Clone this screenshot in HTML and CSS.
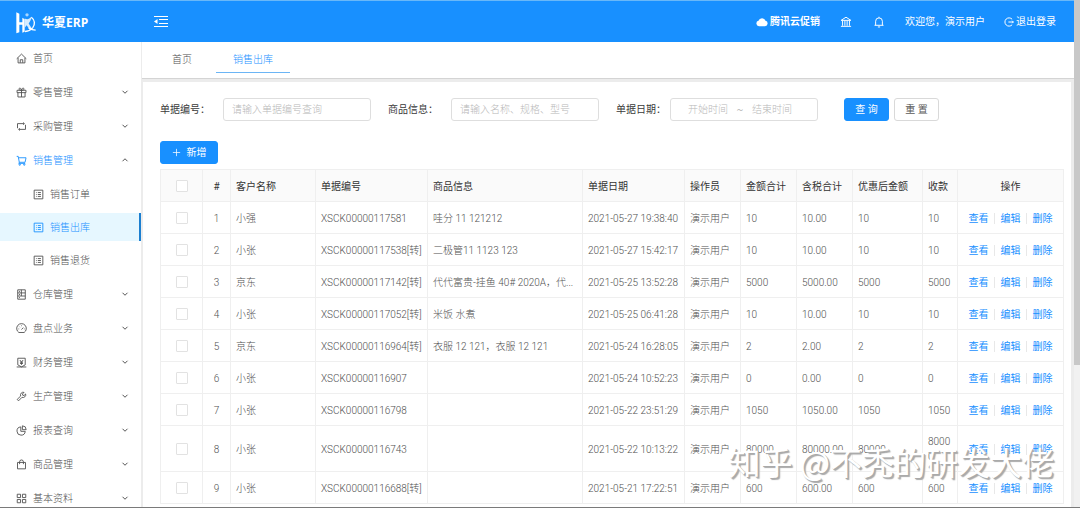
FILE: index.html
```html
<!DOCTYPE html>
<html lang="zh-CN">
<head>
<meta charset="utf-8">
<title>华夏ERP</title>
<link rel="stylesheet" href="styles.css">
</head>
<body>
<svg class="defs" aria-hidden="true">
  <symbol id="i-home" viewBox="0 0 16 16"><path d="M1 8.4 8 1.6l7 6.8M3 7v7.4h10V7M6.2 14.2V9.8h3.6v4.4"/></symbol>
  <symbol id="i-gift" viewBox="0 0 16 16"><path d="M1.5 4.8h13v3.4h-13zM2.8 8.2v6.3h10.4V8.2M8 4.8v9.7M8 4.8C5 4.8 4.3 3.8 4.3 2.9 4.3 1 7.6.8 8 4.8 8.4.8 11.7 1 11.7 2.9c0 .9-.7 1.9-3.7 1.9"/></symbol>
  <symbol id="i-retweet" viewBox="0 0 16 16"><path d="M2.2 10.5V3.8h9.6M10.4 2.2l1.8 1.6-1.8 1.6M13.8 5.5v6.7H4.2M5.6 10.6l-1.8 1.6 1.8 1.6"/></symbol>
  <symbol id="i-cart" viewBox="0 0 16 16"><path d="M1 2h2.2l1.6 8.6h8.4L14.6 4H3.7M4.8 10.6l-.8 1.6h9.4"/><circle cx="5.4" cy="14" r="1"/><circle cx="12" cy="14" r="1"/></symbol>
  <symbol id="i-profile" viewBox="0 0 16 16"><path d="M1.7 1.7h12.6v12.6H1.7zM7 5.2h4.5M7 8h4.5M7 10.8h4.5M4.3 5.2h1M4.3 8h1M4.3 10.8h1"/></symbol>
  <symbol id="i-store" viewBox="0 0 16 16"><path d="M2.5 1.2h11v13.6h-11zM2.5 5.7h11M2.5 10.2h11M7.8 1.2v9M4.4 3.5h1.4M4.4 8h1.4M4.4 12.5h1.4"/></symbol>
  <symbol id="i-dash" viewBox="0 0 16 16"><path d="M4.2 13.8a7 7 0 1 1 7.6 0zM8 9.5l2.6-2.8M8 3.6v1M3.6 8.6h1M11.5 8.6h1M5 5.4l.7.7"/></symbol>
  <symbol id="i-money" viewBox="0 0 16 16"><path d="M2.6 1.8h10.8v9.6L8 14.4l-5.4-3zM1 14.5h14M5.6 4.4 8 7.4l2.4-3M5.8 7.5h4.4M5.8 9.4h4.4M8 7.4v4"/></symbol>
  <symbol id="i-tool" viewBox="0 0 16 16"><path d="M14 4.3a4 4 0 0 1-5.3 4.9l-5 5.1-2-2 5.1-5A4 4 0 0 1 11.7 2L9.4 4.3l.4 1.9 1.9.4z"/></symbol>
  <symbol id="i-pie" viewBox="0 0 16 16"><path d="M7 2.8a6 6 0 1 0 6.4 6.4H7zM9.3 1.2v5.6h5.5a5.6 5.6 0 0 0-5.5-5.6z"/></symbol>
  <symbol id="i-bag" viewBox="0 0 16 16"><path d="M2.2 5h11.6v9.3H2.2zM5.2 7.5V4.2a2.8 2.8 0 0 1 5.6 0v3.3"/></symbol>
  <symbol id="i-grid" viewBox="0 0 16 16"><path d="M1.8 1.8h4.8v4.8H1.8zM9.4 1.8h4.8v4.8H9.4zM1.8 9.4h4.8v4.8H1.8zM9.4 9.4h4.8v4.8H9.4z"/></symbol>
  <symbol id="i-down" viewBox="0 0 16 16"><path d="m3 5.5 5 5 5-5"/></symbol>
  <symbol id="i-up" viewBox="0 0 16 16"><path d="m3 10.5 5-5 5 5"/></symbol>
  <symbol id="i-bank" viewBox="0 0 16 16"><path d="M1.5 5.8 8 1.6l6.5 4.2zM3.4 6v7M6.5 6v7M9.5 6v7M12.6 6v7M1.2 13.8h13.6"/></symbol>
  <symbol id="i-bell" viewBox="0 0 16 16"><path d="M3.5 12.3V7a4.5 4.5 0 0 1 9 0v5.3M2 12.4h12M6.5 14.6h3M8 1v1.4"/></symbol>
  <symbol id="i-logout" viewBox="0 0 16 16"><path d="M13 3.6a6.6 6.6 0 1 0 0 8.8M7 8h8M13 6l2 2-2 2"/></symbol>
  <symbol id="i-plus" viewBox="0 0 16 16"><path d="M8 1.5v13M1.5 8h13"/></symbol>
</svg>

<div class="frame">
  <div class="app">
    <header class="topbar">
      <div class="brand">
        <svg class="brand-logo" viewBox="0 0 60 68" aria-hidden="true">
          <path fill="#fff" d="M1 3l9 5v25h9v-13l7 4v38l-7 3V41h-9v22l-9 3z"/>
          <circle cx="33" cy="11" r="5" fill="#a9d6ff"/>
          <path fill="#d6ecff" d="M26 22c8 4 14 2 20-5 0 9-4 15-8 20l10 16-7 3-9-14-6 8z"/>
          <path fill="none" stroke="#fff" stroke-width="4" d="M46 18c11 8 12 22 4 32-6 7-14 10-23 11"/>
          <path fill="none" stroke="#fff" stroke-width="4" d="M38 50c7 5 13 7 21 7"/>
        </svg>
        <h1 class="brand-name">华夏ERP</h1>
      </div>
      <button class="fold" type="button" aria-label="收起菜单">
        <svg viewBox="0 0 14 13"><path fill="none" stroke="currentColor" d="M0 1.5h14M5 4.5h9M5 8.5h9M0 11.5h14"/><path fill="currentColor" d="M0 6.5 3.5 4v5z"/></svg>
      </button>
      <nav class="top-links">
        <a class="promo" href="#"><svg class="cloud" viewBox="0 0 16 16"><path fill="currentColor" d="M4 13.5a3.6 3.6 0 0 1-.7-7.1 4.9 4.9 0 0 1 9.4 0A3.6 3.6 0 0 1 12 13.5z"/></svg>腾讯云促销</a>
        <a href="#" aria-label="首页"><svg class="icon big"><use href="#i-bank"/></svg></a>
        <a href="#" aria-label="通知"><svg class="icon big"><use href="#i-bell"/></svg></a>
        <span>欢迎您，演示用户</span>
        <a class="exit" href="#"><svg class="icon small"><use href="#i-logout"/></svg>退出登录</a>
      </nav>
    </header>

    <div class="body">
      <aside class="sidebar">
        <ul class="menu">
          <li><a class="item" href="#"><svg class="icon"><use href="#i-home"/></svg>首页</a></li>
          <li><a class="item" href="#"><svg class="icon"><use href="#i-gift"/></svg>零售管理<svg class="icon arrow"><use href="#i-down"/></svg></a></li>
          <li><a class="item" href="#"><svg class="icon"><use href="#i-retweet"/></svg>采购管理<svg class="icon arrow"><use href="#i-down"/></svg></a></li>
          <li>
            <a class="item open" href="#"><svg class="icon"><use href="#i-cart"/></svg>销售管理<svg class="icon arrow"><use href="#i-up"/></svg></a>
            <ul class="submenu">
              <li><a class="item" href="#"><svg class="icon"><use href="#i-profile"/></svg>销售订单</a></li>
              <li><a class="item active" href="#"><svg class="icon"><use href="#i-profile"/></svg>销售出库</a></li>
              <li><a class="item" href="#"><svg class="icon"><use href="#i-profile"/></svg>销售退货</a></li>
            </ul>
          </li>
          <li><a class="item" href="#"><svg class="icon"><use href="#i-store"/></svg>仓库管理<svg class="icon arrow"><use href="#i-down"/></svg></a></li>
          <li><a class="item" href="#"><svg class="icon"><use href="#i-dash"/></svg>盘点业务<svg class="icon arrow"><use href="#i-down"/></svg></a></li>
          <li><a class="item" href="#"><svg class="icon"><use href="#i-money"/></svg>财务管理<svg class="icon arrow"><use href="#i-down"/></svg></a></li>
          <li><a class="item" href="#"><svg class="icon"><use href="#i-tool"/></svg>生产管理<svg class="icon arrow"><use href="#i-down"/></svg></a></li>
          <li><a class="item" href="#"><svg class="icon"><use href="#i-pie"/></svg>报表查询<svg class="icon arrow"><use href="#i-down"/></svg></a></li>
          <li><a class="item" href="#"><svg class="icon"><use href="#i-bag"/></svg>商品管理<svg class="icon arrow"><use href="#i-down"/></svg></a></li>
          <li><a class="item" href="#"><svg class="icon"><use href="#i-grid"/></svg>基本资料<svg class="icon arrow"><use href="#i-down"/></svg></a></li>
        </ul>
      </aside>

      <main class="main">
        <nav class="tabs">
          <a class="tab" href="#">首页</a>
          <a class="tab current" href="#">销售出库</a>
        </nav>
        <section class="card">
          <form class="filters">
            <div class="field"><label for="no">单据编号：</label><input id="no" class="box" type="text" placeholder="请输入单据编号查询"></div>
            <div class="field"><label for="goods">商品信息：</label><input id="goods" class="box" type="text" placeholder="请输入名称、规格、型号"></div>
            <div class="field range-field"><label for="from">单据日期：</label>
              <div class="box range"><input id="from" type="text" placeholder="开始时间"><span>~</span><input type="text" placeholder="结束时间" aria-label="结束时间"></div>
            </div>
            <div class="actions">
              <button class="btn primary" type="button">查 询</button>
              <button class="btn" type="reset">重 置</button>
            </div>
          </form>
          <button class="btn primary add" type="button"><svg class="icon"><use href="#i-plus"/></svg>新增</button>

          <table class="grid">
            <colgroup>
              <col class="c-check"><col class="c-idx"><col class="c-name"><col class="c-no"><col><col class="c-date"><col class="c-sum"><col class="c-sum"><col class="c-sum"><col class="c-off"><col class="c-paid"><col class="c-ops">
            </colgroup>
            <thead>
              <tr><th class="mid"><input type="checkbox" aria-label="全选"></th><th class="mid">#</th><th>客户名称</th><th>单据编号</th><th>商品信息</th><th>单据日期</th><th>操作员</th><th>金额合计</th><th>含税合计</th><th>优惠后金额</th><th>收款</th><th class="mid">操作</th></tr>
            </thead>
            <tbody>
              <tr><td class="mid"><input type="checkbox" aria-label="选择 1"></td><td class="mid">1</td><td>小强</td><td>XSCK00000117581</td><td class="clip">哇分 11 121212</td><td>2021-05-27 19:38:40</td><td>演示用户</td><td>10</td><td>10.00</td><td>10</td><td class="wrap">10</td><td class="ops"><a href="#">查看</a><a href="#">编辑</a><a href="#">删除</a></td></tr>
              <tr><td class="mid"><input type="checkbox" aria-label="选择 2"></td><td class="mid">2</td><td>小张</td><td>XSCK00000117538[转]</td><td class="clip">二极管11 1123 123</td><td>2021-05-27 15:42:17</td><td>演示用户</td><td>10</td><td>10.00</td><td>10</td><td class="wrap">10</td><td class="ops"><a href="#">查看</a><a href="#">编辑</a><a href="#">删除</a></td></tr>
              <tr><td class="mid"><input type="checkbox" aria-label="选择 3"></td><td class="mid">3</td><td>京东</td><td>XSCK00000117142[转]</td><td class="clip">代代富贵-挂鱼 40# 2020A，代...</td><td>2021-05-25 13:52:28</td><td>演示用户</td><td>5000</td><td>5000.00</td><td>5000</td><td class="wrap">5000</td><td class="ops"><a href="#">查看</a><a href="#">编辑</a><a href="#">删除</a></td></tr>
              <tr><td class="mid"><input type="checkbox" aria-label="选择 4"></td><td class="mid">4</td><td>小张</td><td>XSCK00000117052[转]</td><td class="clip">米饭 水煮</td><td>2021-05-25 06:41:28</td><td>演示用户</td><td>10</td><td>10.00</td><td>10</td><td class="wrap">10</td><td class="ops"><a href="#">查看</a><a href="#">编辑</a><a href="#">删除</a></td></tr>
              <tr><td class="mid"><input type="checkbox" aria-label="选择 5"></td><td class="mid">5</td><td>京东</td><td>XSCK00000116964[转]</td><td class="clip">衣服 12 121，衣服 12 121</td><td>2021-05-24 16:28:05</td><td>演示用户</td><td>2</td><td>2.00</td><td>2</td><td class="wrap">2</td><td class="ops"><a href="#">查看</a><a href="#">编辑</a><a href="#">删除</a></td></tr>
              <tr><td class="mid"><input type="checkbox" aria-label="选择 6"></td><td class="mid">6</td><td>小张</td><td>XSCK00000116907</td><td></td><td>2021-05-24 10:52:23</td><td>演示用户</td><td>0</td><td>0.00</td><td>0</td><td class="wrap">0</td><td class="ops"><a href="#">查看</a><a href="#">编辑</a><a href="#">删除</a></td></tr>
              <tr><td class="mid"><input type="checkbox" aria-label="选择 7"></td><td class="mid">7</td><td>小张</td><td>XSCK00000116798</td><td></td><td>2021-05-22 23:51:29</td><td>演示用户</td><td>1050</td><td>1050.00</td><td>1050</td><td class="wrap">1050</td><td class="ops"><a href="#">查看</a><a href="#">编辑</a><a href="#">删除</a></td></tr>
              <tr><td class="mid"><input type="checkbox" aria-label="选择 8"></td><td class="mid">8</td><td>小张</td><td>XSCK00000116743</td><td></td><td>2021-05-22 10:13:22</td><td>演示用户</td><td>80000</td><td>80000.00</td><td>80000</td><td class="wrap">80000</td><td class="ops"><a href="#">查看</a><a href="#">编辑</a><a href="#">删除</a></td></tr>
              <tr><td class="mid"><input type="checkbox" aria-label="选择 9"></td><td class="mid">9</td><td>小张</td><td>XSCK00000116688[转]</td><td></td><td>2021-05-21 17:22:51</td><td>演示用户</td><td>600</td><td>600.00</td><td>600</td><td class="wrap">600</td><td class="ops"><a href="#">查看</a><a href="#">编辑</a><a href="#">删除</a></td></tr>
            </tbody>
          </table>
        </section>
      </main>
    </div>
  </div>
  <div class="scrollbar"><div class="thumb"></div></div>
  <div class="watermark">知乎 @不秃的研发大佬</div>
</div>
</body>
</html>
```
FILE: styles.css
```css
* { box-sizing: border-box; }
body {
  margin: 0;
  font: 300 10px/15px Roboto, "Noto Sans CJK SC", sans-serif;
  color: #505050;
  background: #f0f2f5;
}
a { color: inherit; text-decoration: none; }
ul { list-style: none; margin: 0; padding: 0; }
button, input { font: inherit; color: inherit; }
.defs { position: absolute; width: 0; height: 0; }
.icon {
  width: 11px;
  height: 11px;
  flex: none;
  fill: none;
  stroke: currentColor;
  stroke-width: 1.3;
}
.icon.big { width: 12px; height: 12px; }
.icon.small { width: 10px; height: 10px; stroke-width: 1.6; }

.frame {
  position: relative;
  display: flex;
  height: 100vh;
  overflow: hidden;
  border-bottom: 1px solid #7a7a7a;
}
.app { flex: 1; min-width: 0; display: flex; flex-direction: column; }

.topbar {
  flex: none;
  display: flex;
  align-items: center;
  height: 42px;
  background: #1890ff;
  border-top: 1px solid #69b8f8;
  color: #fff;
}
.brand { display: flex; align-items: center; gap: 6px; width: 154px; padding: 2px 0 0 16px; }
.brand-logo { width: 20px; height: 23px; }
.brand-name { margin: 0; font: bold 12px/18px "Open Sans", "Noto Sans CJK SC", sans-serif; }
.fold { padding: 0; border: 0; background: none; height: 18px; }
.fold svg { display: block; width: 14px; height: 13px; }
.top-links { display: flex; align-items: center; gap: 19px; margin-left: auto; padding-right: 18px; font-weight: 400; }
.top-links a { display: flex; align-items: center; }
.top-links .promo { font-weight: 700; gap: 2px; }
.top-links .big { margin: 0 1px; }
.cloud { width: 12px; height: 12px; }
.top-links .exit { gap: 2px; }

.body { flex: 1; display: flex; min-height: 0; }
.sidebar {
  flex: none;
  width: 141px;
  overflow: hidden;
  background: #fff;
  padding-top: 2px;
}
.menu { display: flex; flex-direction: column; gap: 6px; }
.submenu { display: flex; flex-direction: column; gap: 5px; padding-top: 6px; }
.item { display: flex; align-items: center; gap: 6px; height: 28px; padding: 0 12px 0 16px; }
.submenu .item { padding-left: 33px; }
.item .arrow { width: 8px; height: 8px; margin-left: auto; stroke-width: 2; color: #555; }
.item.open { color: #1890ff; }
.item.active { color: #1890ff; background: #e6f7ff; border-right: 2px solid #1c7fd0; }

.main { flex: 1; min-width: 0; padding: 0 3px 0 2px; background: #ececec; }
.tabs {
  display: flex;
  height: 37px;
  margin: 0 -3px 3px -1px;
  padding-left: 13px;
  gap: 7px;
  background: #fff;
  border-bottom: 1px solid #d4d4d4;
}
.tab { height: 31px; padding: 10px 17px 0; }
.tab.current { color: #1890ff; border-bottom: 1px solid #6bb5f5; }

.card { height: 100%; padding: 16px 7px 0 17px; background: #fff; }
.filters { display: flex; gap: 17px; color: #3a3a3a; }
.field { display: flex; align-items: center; }
.field label { width: 63px; font-weight: 400; }
.range-field label { width: 54px; }
.box {
  width: 148px;
  height: 23px;
  padding: 0 8px;
  border: 1px solid #dedede;
  border-radius: 3px;
  background: #fff;
}
.range { display: flex; align-items: center; justify-content: center; padding-right: 16px; color: #aaa; }
.range input { width: 57px; padding: 0; border: 0; background: none; text-align: center; }
::placeholder { color: #b8b8b8; opacity: 1; }
.actions { display: flex; gap: 5px; margin-left: 9px; }
.btn {
  width: 45px;
  height: 23px;
  padding: 0;
  border: 1px solid #d9d9d9;
  border-radius: 3px;
  background: #fff;
  color: #595959;
  font-weight: 400;
}
.btn.primary { border-color: #1890ff; background: #1890ff; color: #fff; }
.btn.add { display: flex; align-items: center; justify-content: center; gap: 6px; width: 58px; margin: 20px 0 5px; }
.add .icon { width: 9px; height: 9px; }

.grid { width: 100%; table-layout: fixed; border-collapse: collapse; }
.c-check { width: 42px; }
.c-idx { width: 28px; }
.c-name { width: 85px; }
.c-no { width: 112px; }
.c-date { width: 102px; }
.c-sum { width: 56px; }
.c-off { width: 70px; }
.c-paid { width: 35px; }
.c-ops { width: 106px; }
.grid th, .grid td {
  height: 32px;
  padding: 8px 5px 7px;
  border: 1px solid #efefef;
  text-align: left;
  white-space: nowrap;
}
.grid th { background: #fafafa; color: #333; font-weight: 400; }
.grid .mid { text-align: center; }
.grid .clip { overflow: hidden; text-overflow: ellipsis; }
.grid .wrap { white-space: normal; word-break: break-all; }
.grid input {
  appearance: none;
  display: block;
  width: 12px;
  height: 12px;
  margin: 0 auto;
  border: 1px solid #e2e2e2;
  border-radius: 1px;
  background: #fff;
}
.grid .ops { text-align: center; }
.ops a { color: #1890ff; font-weight: 400; }
.ops a + a { margin-left: 5px; padding-left: 6px; border-left: 1px solid #e8e8e8; }

.scrollbar { flex: none; width: 6px; background: #f1f1f1; }
.thumb { height: 72%; background: #c8c8c8; }

.watermark {
  position: absolute;
  right: 26px;
  bottom: 23px;
  font: 400 32px/46px "Noto Sans CJK SC", sans-serif;
  color: #fff;
  text-shadow: 1px 1px 0 #aaa, 2px 2px 1px #aaa;
  pointer-events: none;
}
```
